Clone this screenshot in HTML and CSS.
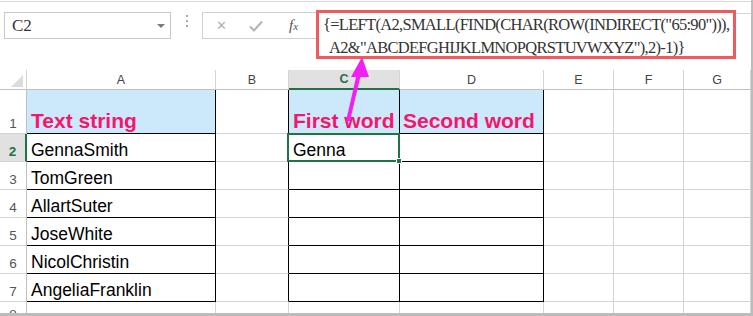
FILE: index.html
```html
<!DOCTYPE html>
<html lang="en">
<head>
    <meta charset="UTF-8">
    <title>Split first word</title>
    <link rel="stylesheet" href="styles.css">
</head>
<body>
    <div id="window">
        <div id="topline"></div>
        <!-- name box + formula bar -->
        <div id="toolbar">
            <div class="namebox">
                <span>C2</span>
                <span class="caret"></span>
            </div>
            <div class="grip"><i></i><i></i><i></i></div>
            <div class="fxbtns">
                <span class="cancel">&#x2715;</span>
                <svg class="check" width="14" height="12" viewBox="0 0 14 12"><path d="M1 6.5 L5 10.5 L13 1.5" fill="none" stroke="#b3b3b3" stroke-width="2"/></svg>
                <span class="fx">f<small>x</small></span>
            </div>
            <div class="formula">
                <div>{=LEFT(A2,SMALL(FIND(CHAR(ROW(INDIRECT("65:90"))),</div>
                <div class="cont">A2&amp;"ABCDEFGHIJKLMNOPQRSTUVWXYZ"),2)-1)}</div>
            </div>
            <div class="fxrest"></div>
        </div>

        <div id="sheet">
            <div class="corner"><span></span></div>
            <div class="hd">A</div>
            <div class="hd">B</div>
            <div class="hd sel">C</div>
            <div class="hd">D</div>
            <div class="hd">E</div>
            <div class="hd">F</div>
            <div class="hd">G</div>

            <div class="rh">1</div>
            <div class="c t head">Text string</div>
            <div class="c bl"></div>
            <div class="c t head">First word</div>
            <div class="c t head last">Second word</div>
            <div class="c"></div>
            <div class="c"></div>
            <div class="c"></div>

            <div class="rh sel">2</div>
            <div class="c t">GennaSmith</div>
            <div class="c bl"></div>
            <div class="c t active">Genna<span class="handle"></span></div>
            <div class="c t"></div>
            <div class="c"></div>
            <div class="c"></div>
            <div class="c"></div>

            <div class="rh">3</div>
            <div class="c t">TomGreen</div>
            <div class="c bl"></div>
            <div class="c t"></div>
            <div class="c t"></div>
            <div class="c"></div>
            <div class="c"></div>
            <div class="c"></div>

            <div class="rh">4</div>
            <div class="c t">AllartSuter</div>
            <div class="c bl"></div>
            <div class="c t"></div>
            <div class="c t"></div>
            <div class="c"></div>
            <div class="c"></div>
            <div class="c"></div>

            <div class="rh">5</div>
            <div class="c t">JoseWhite</div>
            <div class="c bl"></div>
            <div class="c t"></div>
            <div class="c t"></div>
            <div class="c"></div>
            <div class="c"></div>
            <div class="c"></div>

            <div class="rh">6</div>
            <div class="c t">NicolChristin</div>
            <div class="c bl"></div>
            <div class="c t"></div>
            <div class="c t"></div>
            <div class="c"></div>
            <div class="c"></div>
            <div class="c"></div>

            <div class="rh">7</div>
            <div class="c t">AngeliaFranklin</div>
            <div class="c bl"></div>
            <div class="c t"></div>
            <div class="c t"></div>
            <div class="c"></div>
            <div class="c"></div>
            <div class="c"></div>

            <div class="rh cut">8</div>
            <div class="c"></div>
            <div class="c"></div>
            <div class="c"></div>
            <div class="c"></div>
            <div class="c"></div>
            <div class="c"></div>
            <div class="c"></div>
        </div>

        <!-- callout arrow pointing at the formula -->
        <svg class="arrow" width="753" height="316" viewBox="0 0 753 316">
            <path d="M346 121 L350 121 L361 74 L357 73 Z" fill="#f21ff2"/>
            <path d="M362 57 L351 77 L369 77 Z" fill="#f21ff2"/>
        </svg>
    </div>
</body>
</html>
```

FILE: styles.css
```css
* {
    margin: 0;
    padding: 0;
    box-sizing: border-box;
}

html, body {
    width: 100%;
    height: 100%;
    overflow: hidden;
    background: #ffffff;
}

#window {
    position: relative;
    width: 753px;
    height: 316px;
    border-right: 2px solid #bcbcbc;
    border-bottom: 3px solid #bcbcbc;
    overflow: hidden;
    font-family: "Liberation Sans", Arial, sans-serif;
}

#topline {
    margin-top: 1px;
    height: 1px;
    background: #dadada;
}

/* name box + formula bar */
#toolbar {
    display: flex;
    align-items: flex-start;
    height: 68px;
}

.namebox {
    margin: 10px 0 0 4px;
    width: 167px;
    height: 27px;
    border: 1px solid #c8c8c8;
    display: flex;
    align-items: center;
    justify-content: space-between;
    padding: 0 5px 0 7px;
    font-family: "Liberation Serif", "Times New Roman", serif;
    font-size: 17px;
    color: #333;
}

.caret {
    width: 0;
    height: 0;
    border-left: 4px solid transparent;
    border-right: 4px solid transparent;
    border-top: 4px solid #7a7a7a;
}

.grip {
    width: 31px;
    height: 37px;
    display: flex;
    flex-direction: column;
    align-items: center;
    justify-content: center;
    gap: 3px;
}

.grip i {
    display: block;
    width: 2px;
    height: 2px;
    background: #a8a8a8;
}

.fxbtns {
    margin-top: 10px;
    width: 114px;
    height: 27px;
    border: 1px solid #d0d0d0;
    border-right: none;
    display: flex;
    align-items: center;
    padding-left: 13px;
}

.cancel {
    font-size: 13px;
    color: #b3b3b3;
    width: 33px;
}

.check {
    margin-right: 26px;
}

.fx {
    font-family: "Liberation Serif", serif;
    font-style: italic;
    font-size: 15px;
    color: #555;
}

.fx small {
    font-size: 11px;
}

.formula {
    margin-top: 8px;
    width: 420px;
    height: 49px;
    border: 3px solid #ef5a5e;
    padding: 0 0 0 4px;
    font-family: "Liberation Serif", "Times New Roman", serif;
    font-size: 16.5px;
    letter-spacing: -0.7px;
    line-height: 23px;
    color: #333;
    white-space: nowrap;
    overflow: hidden;
}

.formula .cont {
    padding-left: 6px;
}

.fxrest {
    flex: 1;
    margin-top: 11px;
    border-top: 1px solid #d4d4d4;
}

/* grid */
#sheet {
    display: grid;
    grid-template-columns: 27px 189px 73px 111px 144px 70px 70px 67px;
    grid-template-rows: 20px 44px repeat(6, 28px) 12px;
}

#sheet > div {
    border-right: 1px solid #d4d4d4;
    border-bottom: 1px solid #d4d4d4;
}

.corner {
    position: relative;
    border-bottom-color: #c0c0c0 !important;
}

.corner span {
    position: absolute;
    right: 3px;
    bottom: 2px;
    width: 0;
    height: 0;
    border-left: 12px solid transparent;
    border-bottom: 12px solid #dcdcdc;
}

.hd {
    display: flex;
    align-items: center;
    justify-content: center;
    font-size: 12.5px;
    color: #444;
    border-bottom-color: #c0c0c0 !important;
}

.hd.sel {
    background: #e1e1e1;
    color: #217346;
    font-weight: bold;
    border-bottom: 2px solid #217346 !important;
}

.rh {
    display: flex;
    align-items: flex-end;
    justify-content: center;
    font-size: 13.5px;
    line-height: 16px;
    padding-bottom: 1px;
    color: #555;
    border-right-color: #c0c0c0 !important;
    overflow: hidden;
}

.rh.cut {
    align-items: flex-start;
    padding-top: 5px;
}

.rh.sel {
    background: #e1e1e1;
    color: #217346;
    font-weight: bold;
    border-right: 2px solid #217346 !important;
}

.c {
    display: flex;
    align-items: flex-end;
    padding: 0 4px 1px;
    font-size: 17.5px;
    line-height: 20px;
    color: #000;
    white-space: nowrap;
}

.c.t {
    border-right-color: #000 !important;
    border-bottom-color: #000 !important;
}

.c.bl {
    border-right-color: #000 !important;
}

.c.head {
    background: #cce9fb;
    color: #f5166c;
    font-weight: bold;
    font-size: 21px;
    line-height: 24px;
    padding: 0 0 0 4px;
}

.c.head.last {
    padding-left: 3px;
}

.active {
    position: relative;
}

.active::after {
    content: "";
    position: absolute;
    left: -2px;
    top: -1px;
    right: -1px;
    bottom: -1px;
    border: 2px solid #217346;
}

.handle {
    position: absolute;
    right: -3px;
    bottom: -3px;
    width: 6px;
    height: 6px;
    background: #217346;
    border: 1px solid #ffffff;
    z-index: 2;
}

.arrow {
    position: absolute;
    left: 0;
    top: 0;
    pointer-events: none;
}
```
